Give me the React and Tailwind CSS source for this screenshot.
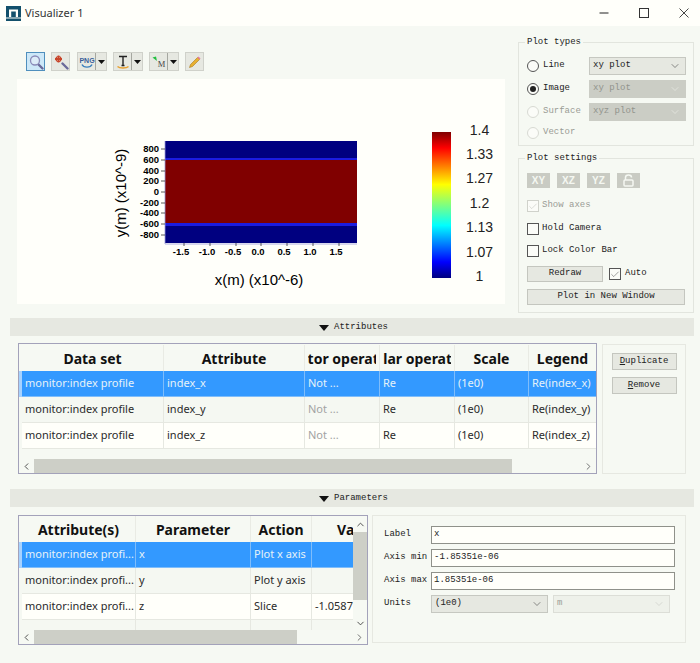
import React from 'react';
import { ChevronDown, ChevronLeft, ChevronRight, ChevronUp, Check } from 'lucide-react';

const mono = 'font-["Liberation_Mono",monospace] text-[9px]';
const ui = 'font-["Noto_Sans",sans-serif]';

const attrColumns = [
  { name: 'Data set', width: 'w-[142px]' },
  { name: 'Attribute', width: 'w-[141px]' },
  { name: 'Vector operation', width: 'w-[75px]' },
  { name: 'Scalar operation', width: 'w-[75px]' },
  { name: 'Scale', width: 'w-[74px]' },
  { name: 'Legend', width: 'w-[68px]' },
];

const attrRows = [
  ['monitor:index profile', 'index_x', 'Not ...', 'Re', '(1e0)', 'Re(index_x)'],
  ['monitor:index profile', 'index_y', 'Not ...', 'Re', '(1e0)', 'Re(index_y)'],
  ['monitor:index profile', 'index_z', 'Not ...', 'Re', '(1e0)', 'Re(index_z)'],
];

const paramColumns = [
  { name: 'Attribute(s)', width: 'w-[114px]' },
  { name: 'Parameter', width: 'w-[115px]' },
  { name: 'Action', width: 'w-[61px]' },
  { name: 'Value', width: 'w-[90px]' },
];

const paramRows = [
  ['monitor:index profi...', 'x', 'Plot x axis', ''],
  ['monitor:index profi...', 'y', 'Plot y axis', ''],
  ['monitor:index profi...', 'z', 'Slice', '-1.0587'],
  ['', '', '', ''],
];

function Table({ columns, rows, dimColumn }) {
  return (
    <div className="flex-1 min-h-0 overflow-hidden">
      <div className="flex h-[26px]">
        <div className="w-[3px] shrink-0" />
        {columns.map((c) => (
          <div key={c.name} className={`${c.width} shrink-0 px-[3px] border-r border-[#e9ebe4]`}>
            <div className={`h-full flex justify-center items-center overflow-hidden whitespace-nowrap ${ui} text-[14px] font-bold text-[#111]`}>
              {c.name}
            </div>
          </div>
        ))}
      </div>
      {rows.map((row, i) => (
        <div key={i} className={`flex h-[26px] ${i === 0 ? 'bg-[#3399ff]' : i % 2 === 1 ? 'bg-[#f5f8f2]' : 'bg-[#fffffa]'}`}>
          <div className={`w-[3px] shrink-0 ${i === 0 ? 'bg-[#a6d2ff]' : 'bg-[#f5f8f2]'}`} />
          {row.map((text, j) => (
            <div
              key={j}
              className={`${columns[j].width} shrink-0 flex items-center px-[3px] overflow-hidden whitespace-nowrap border-r border-b ${i === 0 ? 'border-[#7fbdfb] text-[#e6f2f8]' : j === dimColumn ? 'border-[#e6e8e1] text-[#a3a3a3]' : 'border-[#e6e8e1] text-[#2a2a2a]'} ${ui} text-[11px]`}
            >
              {text}
            </div>
          ))}
        </div>
      ))}
    </div>
  );
}

function HScroll({ thumb }) {
  return (
    <div className="flex h-[14px] items-center shrink-0">
      <div className="w-[15px] flex justify-center"><ChevronLeft size={11} strokeWidth={2} className="text-[#444]" /></div>
      <div className="flex-1 h-full">
        <div className={`${thumb} h-full bg-[#cdcfc7]`} />
      </div>
      <div className="w-[15px] flex justify-center"><ChevronRight size={11} strokeWidth={2} className="text-[#666]" /></div>
    </div>
  );
}

function SectionBar({ label, className = '' }) {
  return (
    <div className={`${className} h-[18px] ml-[10px] w-[684px] bg-[#e6e8e1] flex items-center justify-center pt-px ${mono} text-[#222]`}>
      <div className="ml-[3px] flex items-center gap-[5px]">
        <svg width="10" height="6" viewBox="0 0 10 6"><path d="M0 0h10L5 6z" fill="#111" /></svg>
        {label}
      </div>
    </div>
  );
}

function Radio({ checked, disabled }) {
  return (
    <span className={`w-[12px] h-[12px] shrink-0 rounded-full border bg-[#fbfcf8] flex items-center justify-center ${disabled ? 'border-[#d8dad3]' : 'border-[#555]'}`}>
      {checked && <span className="w-[6px] h-[6px] rounded-full bg-[#222]" />}
    </span>
  );
}

function Select({ value, disabled, className }) {
  return (
    <div className={`${className} h-[18px] flex items-center justify-between pl-[3px] pr-[4px] border ${mono} ${disabled ? 'bg-[#cbcdc5] border-[#cbcdc5] text-[#92948d]' : 'bg-[#e6e8e1] border-[#c6c8c1] text-[#222]'}`}>
      {value}
      <ChevronDown size={12} strokeWidth={1.2} className={`shrink-0 ${disabled ? 'text-[#eef0e9]' : 'text-[#444]'}`} />
    </div>
  );
}

function Box({ checked, disabled }) {
  return (
    <span className={`w-[12px] h-[12px] shrink-0 border flex items-center justify-center bg-[#fbfcf8] ${disabled ? 'border-[#d0d2cb]' : 'border-[#555]'}`}>
      {checked && <Check size={11} strokeWidth={1.2} className={disabled ? 'text-[#bbbdb6]' : 'text-[#444]'} />}
    </span>
  );
}

function PushButton({ children, className }) {
  return (
    <div className={`${className} bg-[#e6e8e1] border border-[#c4c6bf] flex items-center justify-center ${mono} text-[#222]`}>
      {children}
    </div>
  );
}

function AxisButton({ children }) {
  return (
    <div className="w-[23px] h-[15px] bg-[#c9cbc3] flex items-center justify-center font-['Liberation_Sans',sans-serif] text-[10px] font-bold text-[#f5f8f2]">
      {children}
    </div>
  );
}

function ToolButton({ selected, children }) {
  return (
    <div className={`w-[19px] h-[19px] flex items-center justify-center border ${selected ? 'bg-[#cde8f8] border-[#4f8fbd]' : 'bg-[#e6e8e1] border-[#cfd1ca]'}`}>
      {children}
    </div>
  );
}

function ToolMenu({ children, className = '' }) {
  return (
    <div className={`${className} h-[19px] flex bg-[#e6e8e1] border border-[#cfd1ca]`}>
      <div className="w-[18px] flex items-center justify-center border-r border-[#a5a7a0]">{children}</div>
      <div className="w-[10px] flex items-center justify-center">
        <svg width="7" height="4" viewBox="0 0 7 4"><path d="M0 0h7L3.5 4z" fill="#111" /></svg>
      </div>
    </div>
  );
}

const Magnifier = ({ children }) => (
  <svg width="16" height="16" viewBox="0 0 16 16">
    <path d="M9.5 9.5 L14.5 14.5" stroke="#6a6a9a" strokeWidth="2.4" strokeLinecap="round" />
    {children}
  </svg>
);

function Plot() {
  const yTicks = [['800', 149], ['600', 160], ['400', 171], ['200', 181], ['0', 192], ['-200', 203], ['-400', 213], ['-600', 224], ['-800', 235]];
  const xTicks = [['-1.5', 181], ['-1.0', 207], ['-0.5', 233], ['0.0', 258], ['0.5', 284], ['1.0', 310], ['1.5', 336]];
  const barTicks = [['1.4', 130], ['1.33', 154], ['1.27', 178], ['1.2', 203], ['1.13', 227], ['1.07', 252], ['1', 276]];
  return (
    <svg width="488" height="225" viewBox="17 79 488 225" className="block bg-[#fffffa]" fontFamily="'Liberation Sans', sans-serif">
      <defs>
        <linearGradient id="jet" x1="0" y1="1" x2="0" y2="0">
          <stop offset="0" stopColor="#00007f" />
          <stop offset="0.11" stopColor="#0000ff" />
          <stop offset="0.36" stopColor="#00ffff" />
          <stop offset="0.5" stopColor="#7fff7f" />
          <stop offset="0.64" stopColor="#ffff00" />
          <stop offset="0.89" stopColor="#ff0000" />
          <stop offset="1" stopColor="#7f0000" />
        </linearGradient>
      </defs>
      <rect x="165" y="141" width="192" height="102" fill="#000080" />
      <rect x="165" y="158" width="192" height="3" fill="#1c1ce0" />
      <rect x="165" y="160" width="192" height="63" fill="#800000" />
      <rect x="165" y="223" width="192" height="3" fill="#1c1ce0" />
      <path d="M165 141V244H357" fill="none" stroke="#9a9ad8" strokeWidth="0.8" />
      {yTicks.map(([t, y]) => (
        <g key={t}>
          <text x="159" y={y + 3} textAnchor="end" fontSize="9.5" fontWeight="700" fill="#000">{t}</text>
          <path d={`M161 ${y}h4`} stroke="#333" strokeWidth="0.8" />
        </g>
      ))}
      {xTicks.map(([t, x]) => (
        <g key={t}>
          <text x={x} y="255" textAnchor="middle" fontSize="9.5" fontWeight="700" fill="#000">{t}</text>
          <path d={`M${x + 3} 243v3`} stroke="#333" strokeWidth="0.8" />
        </g>
      ))}
      <text x="259" y="285" textAnchor="middle" fontSize="15" fill="#000">x(m) (x10^-6)</text>
      <text transform="translate(126 193) rotate(-90)" textAnchor="middle" fontSize="15" fill="#000">y(m) (x10^-9)</text>
      <rect x="432" y="132" width="19" height="146" fill="url(#jet)" />
      {barTicks.map(([t, y]) => (
        <text key={t} x="479.500" y={y + 5} textAnchor="middle" fontSize="14" fill="#222">{t}</text>
      ))}
    </svg>
  );
}

export default function App() {
  return (
    <div className="w-[700px] h-[663px] overflow-hidden bg-[#f6f9f3] flex flex-col">
      {/* Title bar */}
      <div className="h-[26px] bg-[#fffffa] flex items-center shrink-0">
        <svg width="15" height="15" viewBox="0 0 15 15" className="ml-[6px]">
          <rect width="15" height="15" fill="#13506b" />
          <path d="M3 11V3.5h9V11h-2.2V5.5H5.2V11z M0 11.5h15V12.500H0z" fill="#fffffa" />
        </svg>
        <span className={`ml-[4px] ${ui} text-[11px] text-[#333]`}>Visualizer 1</span>
        <div className="ml-auto flex items-center gap-[30px] pr-[11px]">
          <svg width="10" height="10" viewBox="0 0 10 10"><path d="M0.500 5h9" stroke="#222" /></svg>
          <svg width="10" height="10" viewBox="0 0 10 10"><rect x="0.500" y="0.500" width="9" height="9" fill="none" stroke="#333" /></svg>
          <svg width="10" height="10" viewBox="0 0 10 10"><path d="M0.500 0.500l9 9M9.500 0.500l-9 9" stroke="#333" strokeWidth="0.900" /></svg>
        </div>
      </div>

      {/* Top area */}
      <div className="h-[292px] shrink-0 flex pl-[17px]">
        <div className="w-[488px] pt-[26px]">
          <div className="flex h-[19px] gap-[6px] ml-[9px]">
            <ToolButton selected>
              <Magnifier>
                <circle cx="7" cy="6.500" r="4.500" fill="#dcecf8" stroke="#8a8ab8" strokeWidth="1.300" />
              </Magnifier>
            </ToolButton>
            <ToolButton>
              <Magnifier>
                <path d="M5.500 1.500v7M2 5h7" stroke="#c8452a" strokeWidth="1.800" />
                <circle cx="5.500" cy="5" r="2.500" fill="none" stroke="#c8452a" strokeWidth="1.200" />
              </Magnifier>
            </ToolButton>
            <ToolMenu className="ml-px">
              <svg width="16" height="16" viewBox="0 0 16 16">
                <text x="8" y="8.500" textAnchor="middle" fontSize="7" fontWeight="700" fontFamily="'Liberation Sans', sans-serif" fill="#3a5f9a">PNG</text>
                <path d="M3 10.500c1.500 3.500 8.500 3.500 10 0" fill="none" stroke="#3a7fbd" strokeWidth="1.400" />
              </svg>
            </ToolMenu>
            <ToolMenu>
              <svg width="16" height="16" viewBox="0 0 16 16">
                <path d="M4 2.500h8M8 2.500v9M6.500 11.500h3" stroke="#222" strokeWidth="1.400" />
                <path d="M2.500 12.500c2 2 9 2 11 0" fill="none" stroke="#e8a030" strokeWidth="1.400" />
              </svg>
            </ToolMenu>
            <ToolMenu>
              <svg width="16" height="16" viewBox="0 0 16 16">
                <path d="M1.500 3.500 L5 2.500 L6 7 z" fill="#22c040" />
                <text x="10.500" y="13" textAnchor="middle" fontSize="8.500" fontFamily="'Liberation Serif', serif" fill="#444">M</text>
              </svg>
            </ToolMenu>
            <ToolButton>
              <svg width="14" height="14" viewBox="0 0 14 14">
                <path d="M2.500 9.500 L9.500 2.500 L11.500 4.500 L4.500 11.500 L1.500 12.500 z" fill="#e8b030" stroke="#a87a20" strokeWidth="0.600" />
                <path d="M9.500 2.500 L10.500 1.500 L12.500 3.500 L11.500 4.500 z" fill="#e878a0" />
              </svg>
            </ToolButton>
          </div>
          <div className="mt-[8px]">
            <Plot />
          </div>
        </div>

        <div className="ml-[13px] w-[176px] pt-[10px]">
          <fieldset className={`h-[110px] border border-[#e2e5de] pl-[8px] pr-[7px] ${mono} text-[#222]`}>
            <legend className="-ml-[2px] px-[2px] h-[13px] leading-[13px]">Plot types</legend>
            <div className="flex flex-col gap-[5px] mt-[8px]">
              <div className="flex items-center h-[18px]">
                <Radio />
                <span className="ml-[4px] w-[46px]">Line</span>
                <Select value="xy plot" className="w-[97px]" />
              </div>
              <div className="flex items-center h-[18px]">
                <Radio checked />
                <span className="ml-[4px] w-[46px]">Image</span>
                <Select value="xy plot" disabled className="w-[97px]" />
              </div>
              <div className="flex items-center h-[18px] text-[#9a9c95]">
                <Radio disabled />
                <span className="ml-[4px] w-[46px]">Surface</span>
                <Select value="xyz plot" disabled className="w-[97px]" />
              </div>
              <div className="flex items-center h-[14px] text-[#9a9c95]">
                <Radio disabled />
                <span className="ml-[4px]">Vector</span>
              </div>
            </div>
          </fieldset>

          <fieldset className={`mt-[6px] h-[161px] border border-[#e2e5de] px-[8px] ${mono} text-[#222]`}>
            <legend className="-ml-[2px] px-[2px] h-[13px] leading-[13px]">Plot settings</legend>
            <div className="flex gap-[7px] mt-[8px]">
              <AxisButton>XY</AxisButton>
              <AxisButton>XZ</AxisButton>
              <AxisButton>YZ</AxisButton>
              <AxisButton>
                <svg width="13" height="13" viewBox="0 0 13 13" fill="none" stroke="#f5f8f2" strokeWidth="1.500">
                  <rect x="2" y="6" width="9" height="6" rx="1" />
                  <path d="M3.500 6V3.500a3 2.500 0 0 1 6 0" />
                </svg>
              </AxisButton>
            </div>
            <div className="flex items-center gap-[3px] h-[12px] mt-[12px] text-[#9a9c95]"><Box checked disabled />Show axes</div>
            <div className="flex items-center gap-[3px] h-[12px] mt-[11px]"><Box />Hold Camera</div>
            <div className="flex items-center gap-[3px] h-[12px] mt-[10px]"><Box />Lock Color Bar</div>
            <div className="flex items-center mt-[9px]">
              <PushButton className="w-[76px] h-[16px]">Redraw</PushButton>
              <span className="ml-[6px]"><Box checked /></span>
              <span className="ml-[4px]">Auto</span>
            </div>
            <PushButton className="w-[158px] h-[16px] mt-[7px]">Plot in New Window</PushButton>
          </fieldset>
        </div>
      </div>

      {/* Attributes */}
      <SectionBar label="Attributes" />
      <div className="flex mt-[7px] ml-[18px] h-[131px] shrink-0">
        <div className="w-[579px] border border-[#a3a2ba] flex flex-col pt-px">
          <Table columns={attrColumns} rows={attrRows} dimColumn={2} />
          <HScroll thumb="w-[478px]" />
        </div>
        <div className="ml-[5px] w-[84px] h-[130px] mt-px border border-[#e6e8e1] flex flex-col items-center pt-[8px] gap-[7px]">
          <PushButton className="w-[65px] h-[17px]"><span><u>D</u>uplicate</span></PushButton>
          <PushButton className="w-[65px] h-[17px]"><span><u>R</u>emove</span></PushButton>
        </div>
      </div>

      {/* Parameters */}
      <SectionBar label="Parameters" className="mt-[15px]" />
      <div className="flex mt-[8px] ml-[18px] h-[130px] shrink-0">
        <div className="w-[350px] border border-[#a3a2ba] flex flex-col">
          <div className="flex flex-1 min-h-0">
            <Table columns={paramColumns} rows={paramRows} />
            <div className="w-[14px] shrink-0 flex flex-col items-center">
              <ChevronUp size={11} strokeWidth={2} className="mt-[3px] text-[#444]" />
              <div className="w-full h-[68px] mt-[2px] bg-[#cdcfc7]" />
              <ChevronDown size={11} strokeWidth={2} className="mt-[18px] text-[#444]" />
            </div>
          </div>
          <HScroll thumb="w-[263px]" />
        </div>
        <div className={`ml-[4px] w-[314px] h-[128px] border border-[#e6e8e1] pt-[10px] pl-[11px] ${mono} text-[#222]`}>
          {[['Label', 'x'], ['Axis min', '-1.85351e-06'], ['Axis max', '1.85351e-06']].map(([label, value]) => (
            <div key={label} className="flex items-center h-[18px] mb-[5px]">
              <span className="w-[47px]">{label}</span>
              <div className="w-[244px] h-[18px] bg-[#fffffa] border border-[#8f918a] flex items-center pl-[2px]">{value}</div>
            </div>
          ))}
          <div className="flex items-center h-[18px]">
            <span className="w-[47px]">Units</span>
            <Select value="(1e0)" className="w-[117px]" />
            <div className="ml-[5px] w-[117px] h-[18px] border border-[#dcded7] bg-[#eef1ea] flex items-center justify-between pl-[3px] pr-[4px] text-[#9a9c95]">
              m
              <ChevronDown size={12} strokeWidth={1.2} className="shrink-0 text-[#c6c8c1]" />
            </div>
          </div>
        </div>
      </div>
    </div>
  );
}
